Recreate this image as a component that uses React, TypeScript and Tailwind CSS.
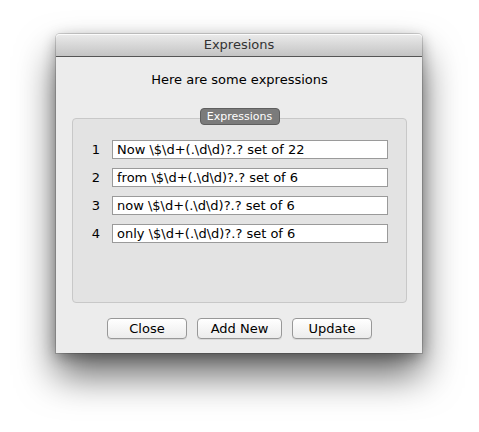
import React from "react";

const rows = [
  "Now \\$\\d+(.\\d\\d)?.? set of 22",
  "from \\$\\d+(.\\d\\d)?.? set of 6",
  "now \\$\\d+(.\\d\\d)?.? set of 6",
  "only \\$\\d+(.\\d\\d)?.? set of 6",
];

function Btn({ label, w }: { label: string; w: string }) {
  return (
    <button
      className={`${w} h-[21px] rounded-[4px] border border-[#989898] bg-gradient-to-b from-white to-[#ececec] text-[13px] leading-[19px] text-black shadow-[0_1px_0_rgba(0,0,0,0.08)]`}
    >
      {label}
    </button>
  );
}

export default function App() {
  return (
    <div
      className="w-[479px] h-[432px] bg-white pl-[56px] pt-[34px]"
      style={{ fontFamily: '"DejaVu Sans", "Lucida Grande", sans-serif' }}
    >
      <div className="w-[366px] h-[319px] bg-[#ececec] rounded-t-[4px] flex flex-col shadow-[0_22px_38px_rgba(0,0,0,0.6),0_4px_14px_rgba(0,0,0,0.3),0_0_0_1px_rgba(0,0,0,0.15)]">
        <div className="h-[23px] rounded-t-[4px] bg-gradient-to-b from-[#ebebeb] to-[#c4c4c4] border-b border-[#555] flex items-center justify-center text-[13px] text-[#333] shadow-[inset_0_1px_0_rgba(255,255,255,0.8)]">
          Expresions
        </div>
        <div className="flex flex-col pl-[16px] pr-[15px]">
          <div className="mt-[15px] h-[16px] leading-[16px] text-center text-[13px] text-black">
            Here are some expressions
          </div>
          <div className="relative mt-[30px] h-[185px] rounded-[4px] border border-[#c8c8c8] bg-[#e3e3e3] pt-[21px] pl-[12px]">
            <div className="absolute left-1/2 -translate-x-1/2 top-[-11px] w-[80px] h-[17px] rounded-[4px] border border-[#5f5f5f] bg-[#7b7b7b] text-white text-[11px] leading-[15px] text-center">
              Expressions
            </div>
            <div className="flex flex-col gap-[9px]">
              {rows.map((r, i) => (
                <div key={i} className="flex items-center h-[19px]">
                  <div className="w-[22px] text-center text-[13px] text-black">{i + 1}</div>
                  <div className="ml-[5px] w-[276px] h-[19px] bg-white border border-[#9a9a9a] pl-[4px] text-[13px] leading-[17px] text-black whitespace-nowrap overflow-hidden">
                    {r}
                  </div>
                </div>
              ))}
            </div>
          </div>
          <div className="mt-[15px] flex justify-center gap-[10px]">
            <Btn label="Close" w="w-[80px]" />
            <Btn label="Add New" w="w-[85px]" />
            <Btn label="Update" w="w-[80px]" />
          </div>
        </div>
      </div>
    </div>
  );
}
